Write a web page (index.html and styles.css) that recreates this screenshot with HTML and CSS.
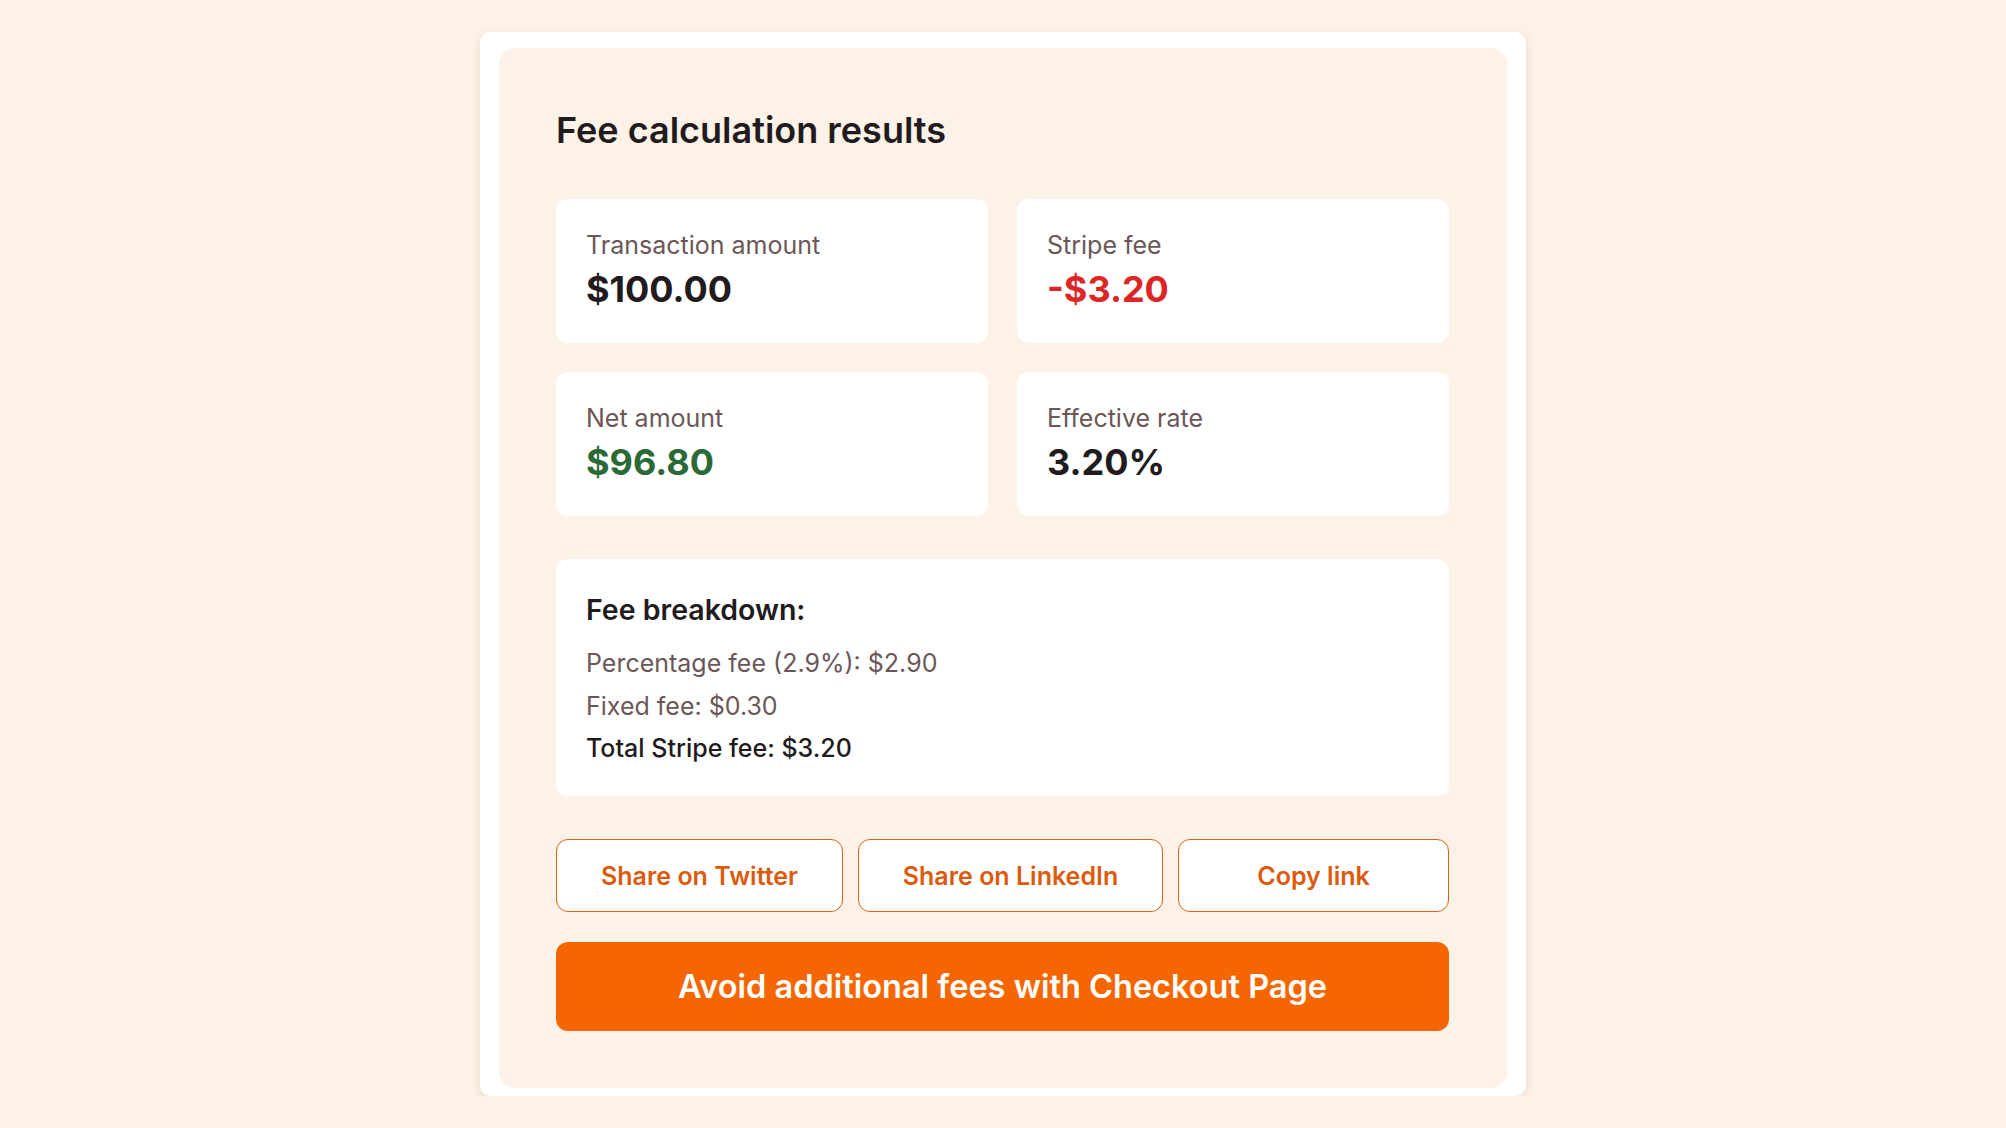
FILE: index.html
```html
<!DOCTYPE html>
<html lang="en">
<head>
<meta charset="utf-8">
<title>Fee calculation results</title>
<link rel="stylesheet" href="styles.css">
</head>
<body>
<main class="frame">
  <section class="results">
    <h2 class="results-title">Fee calculation results</h2>
    <div class="stats">
      <div class="stat">
        <div class="stat-label">Transaction amount</div>
        <div class="stat-value">$100.00</div>
      </div>
      <div class="stat">
        <div class="stat-label">Stripe fee</div>
        <div class="stat-value stat-value--red">-$3.20</div>
      </div>
      <div class="stat">
        <div class="stat-label">Net amount</div>
        <div class="stat-value stat-value--green">$96.80</div>
      </div>
      <div class="stat">
        <div class="stat-label">Effective rate</div>
        <div class="stat-value">3.20%</div>
      </div>
    </div>
    <div class="breakdown">
      <h3 class="breakdown-title">Fee breakdown:</h3>
      <p class="breakdown-line">Percentage fee (2.9%): $2.90</p>
      <p class="breakdown-line">Fixed fee: $0.30</p>
      <p class="breakdown-line breakdown-line--total">Total Stripe fee: $3.20</p>
    </div>
    <div class="share">
      <button class="share-btn">Share on Twitter</button>
      <button class="share-btn">Share on LinkedIn</button>
      <button class="share-btn">Copy link</button>
    </div>
    <button class="cta">Avoid additional fees with Checkout Page</button>
  </section>
</main>
</body>
</html>
```

FILE: styles.css
```css
* {
  box-sizing: border-box;
}

html, body {
  margin: 0;
  padding: 0;
}

body {
  background: #fcf2e7;
  font-family: "Inter", "Noto Sans", sans-serif;
  color: #221b1d;
}

.frame {
  width: 1046px;
  margin: 32px auto 0;
  background: #ffffff;
  border-radius: 11px;
  padding: 16px 19px 8px;
  box-shadow: 0 3px 10px rgba(140, 100, 60, 0.16);
}

.results {
  background: #fcf2e7;
  border-radius: 16px;
  padding: 62px 58px 57px 57px;
}

.results-title {
  margin: 0 0 49px;
  font-size: 36px;
  line-height: 40px;
  font-weight: 600;
  color: #221b1d;
}

.stats {
  display: grid;
  grid-template-columns: 1fr 1fr;
  gap: 29px;
}

.stat {
  background: #ffffff;
  border-radius: 12px;
  height: 144px;
  padding: 30px 30px 0;
}

.stat-label {
  font-size: 25px;
  line-height: 32px;
  color: #6b5759;
}

.stat-value {
  margin-top: 8px;
  font-size: 36px;
  line-height: 40px;
  font-weight: 700;
  color: #221b1d;
}

.stat-value--red {
  color: #dc2626;
}

.stat-value--green {
  color: #2b6a37;
}

.breakdown {
  margin-top: 43px;
  background: #ffffff;
  border-radius: 12px;
  padding: 32px 30px 26.5px;
}

.breakdown-title {
  margin: 0 0 13px;
  font-size: 28.5px;
  line-height: 38px;
  font-weight: 600;
  color: #221b1d;
}

.breakdown-line {
  margin: 0;
  font-size: 25px;
  line-height: 42.5px;
  color: #6b5759;
}

.breakdown-line--total {
  color: #221b1d;
  font-weight: 500;
}

.share {
  margin-top: 43px;
  display: grid;
  grid-template-columns: 287px 305px 1fr;
  gap: 15px;
}

.share-btn {
  height: 73px;
  background: #ffffff;
  border: 1px solid #e0600f;
  border-radius: 12px;
  color: #dc5a0d;
  font-family: inherit;
  font-size: 25px;
  font-weight: 600;
  padding: 0;
}

.cta {
  display: block;
  width: 100%;
  margin-top: 30px;
  height: 89px;
  background: #f56600;
  border: none;
  border-radius: 12px;
  color: #ffffff;
  font-family: inherit;
  font-size: 32.5px;
  font-weight: 600;
}
```
